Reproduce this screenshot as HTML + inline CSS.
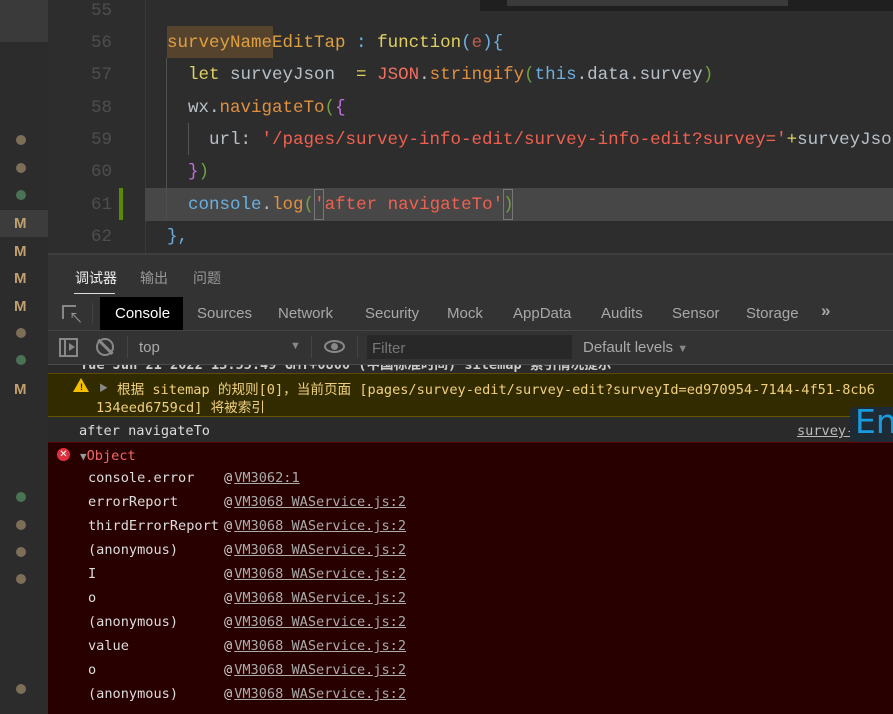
<!DOCTYPE html>
<html><head><meta charset="utf-8"><style>
*{margin:0;padding:0;box-sizing:border-box}
body{width:893px;height:714px;overflow:hidden;background:#2b2b2b;position:relative;font-family:"Liberation Sans","Noto Sans CJK SC",sans-serif}
.a{position:absolute;white-space:pre}
.code{font-family:"Liberation Mono","DejaVu Sans Mono",monospace;font-size:17.5px;color:#b8c0c8}
.ln{font-family:"Liberation Mono",monospace;font-size:17.5px;color:#4e4e4e;width:65px;text-align:right;left:47px}
.dot{position:absolute;left:16px;width:10px;height:10px;border-radius:50%}
.br{background:#7d6e58}.gr{background:#4a7355}
.M{position:absolute;left:14px;font:bold 15px "Liberation Sans",sans-serif;color:#c0a070}
.mono{font-family:"DejaVu Sans Mono","Noto Sans CJK SC",monospace;font-size:13.6px}
.tab{position:absolute;top:305px;font-size:15px;color:#a8a8a8}
.st{position:absolute;left:88px;font-family:"DejaVu Sans Mono",monospace;font-size:13.6px;color:#ddd}
.lk{position:absolute;left:224px;font-family:"DejaVu Sans Mono",monospace;font-size:13.6px;color:#ccc}
.lk u{color:#aaa;margin-left:2px}
</style></head><body>
<div class="a" style="left:0;top:0;width:48px;height:714px;background:#2c2c2c"></div>
<div class="a" style="left:0;top:0;width:48px;height:42px;background:#3a3a3a"></div>
<div class="a" style="left:0;top:210px;width:48px;height:27px;background:#3c3c3c"></div>
<div class="dot br" style="top:135px"></div><div class="dot br" style="top:163px"></div><div class="dot gr" style="top:190px"></div>
<div class="M" style="top:215px">M</div><div class="M" style="top:243px">M</div><div class="M" style="top:270px">M</div><div class="M" style="top:298px">M</div>
<div class="dot br" style="top:328px"></div><div class="dot gr" style="top:355px"></div>
<div class="M" style="top:381px">M</div>
<div class="dot gr" style="top:492px"></div><div class="dot br" style="top:520px"></div><div class="dot br" style="top:547px"></div><div class="dot br" style="top:574px"></div><div class="dot br" style="top:684px"></div>
<div class="a" style="left:48px;top:0;width:845px;height:253px;background:#2d2d2d"></div>
<div class="a" style="left:145px;top:0;width:1px;height:253px;background:#3a3a3a"></div>
<div class="a" style="left:145px;top:188px;width:748px;height:33px;background:#474747"></div>
<div class="a" style="left:119px;top:188px;width:4px;height:32px;background:#5a8a00"></div>
<div class="a" style="left:167px;top:26px;width:106px;height:32px;background:#56432e"></div>
<div class="a" style="left:166px;top:58px;width:1px;height:162px;background:#505050"></div>
<div class="a" style="left:188px;top:123px;width:1px;height:32px;background:#555"></div>
<div class="a" style="left:480px;top:0;width:413px;height:11px;background:#1f1f1f"></div>
<div class="a" style="left:507px;top:0;width:281px;height:6px;background:#3a3a3a"></div>
<div class="a" style="left:314px;top:189px;width:10px;height:31px;border:1px solid #777"></div>
<div class="a" style="left:503px;top:189px;width:10px;height:31px;border:1px solid #777"></div>
<div class="a ln" style="top:1px">55</div>
<div class="a ln" style="top:33px">56</div>
<div class="a ln" style="top:65px">57</div>
<div class="a ln" style="top:98px">58</div>
<div class="a ln" style="top:130px">59</div>
<div class="a ln" style="top:162px">60</div>
<div class="a ln" style="top:195px">61</div>
<div class="a ln" style="top:227px">62</div>
<div class="a code" style="left:167px;top:33px"><span style="color:#e0a040">surveyNameEditTap</span> <span style="color:#6ab0e0">:</span> <span style="color:#e0d060">function</span><span style="color:#6ab0e0">(</span><span style="color:#c06050">e</span><span style="color:#6ab0e0">){</span></div>
<div class="a code" style="left:188px;top:65px"><span style="color:#e0d060">let</span> surveyJson  <span style="color:#e0d060">=</span> <span style="color:#f07060">JSON</span>.<span style="color:#e09040">stringify</span><span style="color:#70a040">(</span><span style="color:#6ab0e0">this</span>.data.survey<span style="color:#70a040">)</span></div>
<div class="a code" style="left:188px;top:98px">wx.<span style="color:#e09040">navigateTo</span><span style="color:#70a040">(</span><span style="color:#c070e0">{</span></div>
<div class="a code" style="left:209px;top:130px">url: <span style="color:#f06050">'/pages/survey-info-edit/survey-info-edit?survey='</span><span style="color:#e0d060">+</span>surveyJson</div>
<div class="a code" style="left:188px;top:162px"><span style="color:#c070e0">}</span><span style="color:#70a040">)</span></div>
<div class="a code" style="left:188px;top:195px"><span style="color:#6ab0e0">console</span>.<span style="color:#e09040">log</span><span style="color:#70a040">(</span><span style="color:#f06050">'after navigateTo'</span><span style="color:#70a040">)</span></div>
<div class="a code" style="left:167px;top:227px;color:#6ab0e0">},</div>
<div class="a" style="left:48px;top:253px;width:845px;height:2px;background:#3d3d3d"></div>
<div class="a" style="left:48px;top:255px;width:845px;height:110px;background:#333"></div>
<div class="a" style="left:75px;top:268px;font-size:14px;color:#eee">调试器</div>
<div class="a" style="left:74px;top:293px;width:41px;height:1px;background:#ddd"></div>
<div class="a" style="left:140px;top:268px;font-size:14px;color:#999">输出</div>
<div class="a" style="left:193px;top:268px;font-size:14px;color:#999">问题</div>
<div class="a" style="left:62px;top:305px;width:14px;height:14px;border:2px solid #888;border-right:none;border-bottom:none"></div>
<div class="a" style="left:69px;top:308px;color:#999;font-size:14px">↖</div>
<div class="a" style="left:92px;top:303px;width:1px;height:20px;background:#444"></div>
<div class="a" style="left:100px;top:297px;width:83px;height:33px;background:#000"></div>
<div class="tab" style="left:115px;color:#fff">Console</div>
<div class="tab" style="left:197px">Sources</div>
<div class="tab" style="left:278px">Network</div>
<div class="tab" style="left:365px">Security</div>
<div class="tab" style="left:447px">Mock</div>
<div class="tab" style="left:513px">AppData</div>
<div class="tab" style="left:601px">Audits</div>
<div class="tab" style="left:672px">Sensor</div>
<div class="tab" style="left:746px">Storage</div>
<div class="tab" style="left:821px;top:301px;font-weight:bold;font-size:17px">»</div>
<div class="a" style="left:48px;top:330px;width:845px;height:1px;background:#444"></div>
<div class="a" style="left:59px;top:338px;width:19px;height:19px;border:2px solid #888"></div>
<div class="a" style="left:64px;top:340px;width:2px;height:15px;background:#888"></div>
<div class="a" style="left:69px;top:343px;width:0;height:0;border-left:6px solid #888;border-top:4px solid transparent;border-bottom:4px solid transparent"></div>
<div class="a" style="left:96px;top:338px;width:18px;height:18px;border:2.5px solid #888;border-radius:50%"></div>
<div class="a" style="left:104px;top:337px;width:2.5px;height:20px;background:#888;transform:rotate(-45deg)"></div>
<div class="a" style="left:127px;top:336px;width:1px;height:22px;background:#444"></div>
<div class="a" style="left:139px;top:339px;font-size:15px;color:#aaa">top</div>
<div class="a" style="left:290px;top:340px;font-size:11px;color:#888">▼</div>
<div class="a" style="left:311px;top:336px;width:1px;height:22px;background:#444"></div>
<div class="a" style="left:324px;top:340px;width:21px;height:13px;border:2.5px solid #888;border-radius:50%/50%"></div>
<div class="a" style="left:331px;top:343px;width:7px;height:7px;background:#888;border-radius:50%"></div>
<div class="a" style="left:357px;top:336px;width:1px;height:22px;background:#444"></div>
<div class="a" style="left:367px;top:335px;width:205px;height:24px;background:#282828"></div>
<div class="a" style="left:372px;top:340px;font-size:15px;color:#777">Filter</div>
<div class="a" style="left:583px;top:339px;font-size:15px;color:#aaa">Default levels <span style="font-size:11px;color:#888">▼</span></div>
<div class="a" style="left:48px;top:364px;width:845px;height:1px;background:#4a4a4a"></div>
<div class="a" style="left:48px;top:365px;width:845px;height:8px;background:#2a2a2a;overflow:hidden"><div class="a mono" style="left:32px;top:-12px;color:#ccc;font-weight:bold">Tue Jun 21 2022 13:55:49 GMT+0800 (中国标准时间) sitemap 索引情况提示</div></div>
<div class="a" style="left:48px;top:373px;width:845px;height:44px;background:#332b00;border-top:1px solid #5c4c00;border-bottom:1px solid #665500"></div>
<div class="a" style="left:73px;top:378px;width:0;height:0;border-left:8px solid transparent;border-right:8px solid transparent;border-bottom:14px solid #f5c000"></div>
<div class="a" style="left:80px;top:382px;font:bold 9px sans-serif;color:#332b00">!</div>
<div class="a" style="left:99px;top:381px;color:#888;font-size:9px">▶</div>
<div class="a mono" style="left:117px;top:378px;color:#f0d080">根据 sitemap 的规则[0]，当前页面 [pages/survey-edit/survey-edit?surveyId=ed970954-7144-4f51-8cb6</div>
<div class="a mono" style="left:96px;top:396px;color:#f0d080">134eed6759cd] 将被索引</div>
<div class="a" style="left:48px;top:417px;width:845px;height:25px;background:#2a2a2a"></div>
<div class="a mono" style="left:79px;top:423px;color:#ddd">after navigateTo</div>
<div class="a mono" style="left:797px;top:423px;color:#bbb;text-decoration:underline">survey-</div>
<div class="a" style="left:850px;top:407px;width:43px;height:35px;background:#1d2b36;border-radius:4px 0 0 4px"></div>
<div class="a" style="left:855px;top:402px;font-size:33px;color:#1a9be0;font-family:'DejaVu Sans',sans-serif">En</div>
<div class="a" style="left:48px;top:442px;width:845px;height:272px;background:#280000;border-top:1px solid #5a0000"></div>
<div class="a" style="left:57px;top:448px;width:13px;height:13px;border-radius:50%;background:#e03040;color:#fff;font-size:10px;line-height:13px;text-align:center">✕</div>
<div class="a mono" style="left:80px;top:448px;color:#f06868"><span style="color:#999;font-size:11px">▼</span>Object</div>
<div class="st" style="top:470px">console.error</div><div class="lk" style="top:470px">@<u>VM3062:1</u></div>
<div class="st" style="top:494px">errorReport</div><div class="lk" style="top:494px">@<u>VM3068 WAService.js:2</u></div>
<div class="st" style="top:518px">thirdErrorReport</div><div class="lk" style="top:518px">@<u>VM3068 WAService.js:2</u></div>
<div class="st" style="top:542px">(anonymous)</div><div class="lk" style="top:542px">@<u>VM3068 WAService.js:2</u></div>
<div class="st" style="top:566px">I</div><div class="lk" style="top:566px">@<u>VM3068 WAService.js:2</u></div>
<div class="st" style="top:590px">o</div><div class="lk" style="top:590px">@<u>VM3068 WAService.js:2</u></div>
<div class="st" style="top:614px">(anonymous)</div><div class="lk" style="top:614px">@<u>VM3068 WAService.js:2</u></div>
<div class="st" style="top:638px">value</div><div class="lk" style="top:638px">@<u>VM3068 WAService.js:2</u></div>
<div class="st" style="top:662px">o</div><div class="lk" style="top:662px">@<u>VM3068 WAService.js:2</u></div>
<div class="st" style="top:686px">(anonymous)</div><div class="lk" style="top:686px">@<u>VM3068 WAService.js:2</u></div>
</body></html>
